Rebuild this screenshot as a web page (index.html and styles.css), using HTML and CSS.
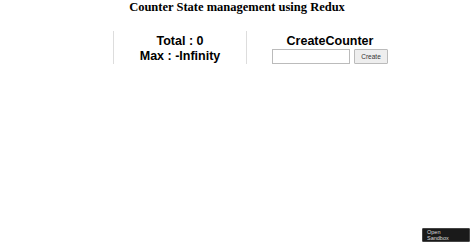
FILE: index.html
```html
<!DOCTYPE html>
<html>
<head>
<meta charset="utf-8">
<link rel="stylesheet" href="styles.css">
</head>
<body>
<h1 class="title">Counter State management using Redux</h1>
<div class="row">
  <div class="col col-stats">
    <div class="big">Total : 0</div>
    <div class="big">Max : -Infinity</div>
  </div>
  <div class="col col-create">
    <div class="big">CreateCounter</div>
    <div class="form">
      <input class="field" type="text">
      <button class="btn">Create</button>
    </div>
  </div>
</div>
<a class="sandbox">Open<br>Sandbox</a>
</body>
</html>
```
FILE: styles.css
```css
html, body {
  margin: 0;
  padding: 0;
  background: #fff;
}
body {
  width: 474px;
  height: 248px;
  font-family: "Liberation Sans", Arial, sans-serif;
  color: #000;
}
.title {
  margin: 0;
  font-family: "Liberation Serif", "Times New Roman", serif;
  font-size: 12.5px;
  font-weight: bold;
  line-height: 14px;
  text-align: center;
}
.row {
  display: flex;
  margin-top: 17px;
  padding-left: 113px;
}
.col {
  border-left: 1px solid #ddd;
  display: flex;
  flex-direction: column;
  align-items: center;
  padding: 3px 0 0;
}
.col-stats {
  width: 132px;
}
.col-create {
  padding-left: 25px;
  padding-right: 25px;
}
.big {
  font-size: 12.5px;
  font-weight: bold;
  line-height: 14.5px;
}
.form {
  display: flex;
  gap: 4px;
}
.field {
  box-sizing: border-box;
  width: 78px;
  height: 15px;
  border: 1px solid #bbb;
  padding: 0;
  margin: 0;
}
.btn {
  box-sizing: border-box;
  width: 34px;
  height: 15px;
  padding: 0;
  margin: 0;
  font-family: "Liberation Sans", Arial, sans-serif;
  font-size: 6.5px;
  color: #333;
  background: #eee;
  border: 1px solid #bbb;
  border-radius: 1px;
}
.sandbox {
  position: fixed;
  right: 4px;
  bottom: 6px;
  box-sizing: border-box;
  width: 48px;
  height: 14px;
  padding: 1px 4px;
  background: #1a1a1a;
  border: 1px solid #444;
  border-radius: 1px;
  color: #ddd;
  font-size: 5.5px;
  line-height: 5.5px;
}
```
